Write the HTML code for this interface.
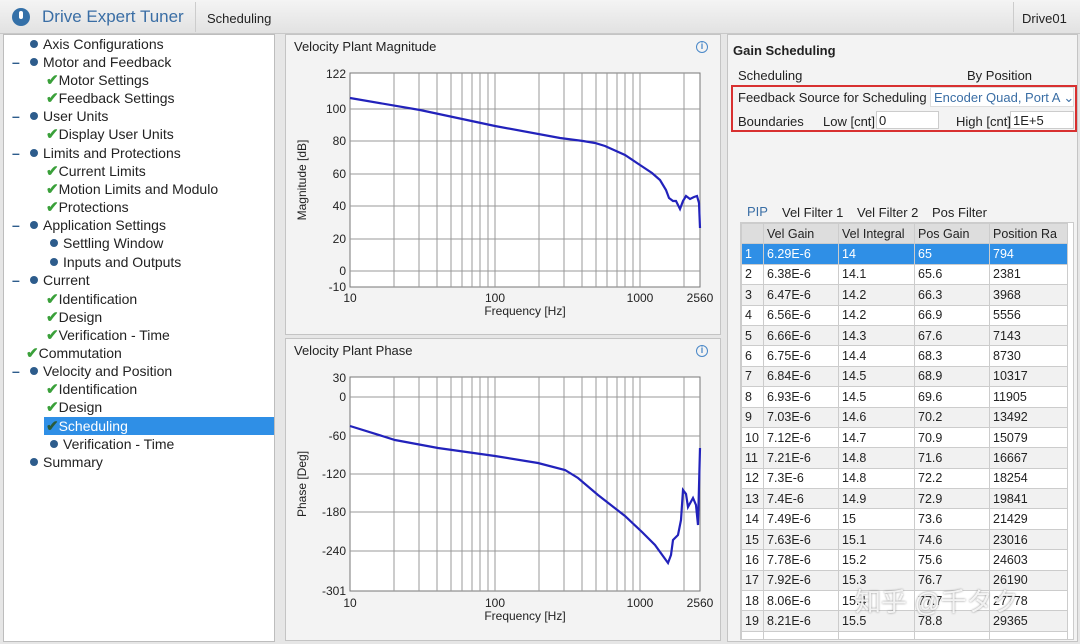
<!DOCTYPE html>
<html><head><meta charset="utf-8"><style>
*{margin:0;padding:0;box-sizing:border-box}
body{width:1080px;height:644px;background:#e6e6e6;font-family:"Liberation Sans",Arial,sans-serif;position:relative;overflow:hidden;color:#222}
.abs{position:absolute}
.hdr{left:0;top:0;width:1080px;height:34px;background:linear-gradient(#f4f4f4,#e2e2e2);border-bottom:1px solid #c8c8c8}
.tree{left:3px;top:34px;width:272px;height:608px;background:#fff;border:1px solid #bdbdbd}
.ti{position:absolute;font-size:14px;line-height:18px;white-space:nowrap}
.dot{display:inline-block;width:8px;height:8px;border-radius:50%;background:#2d5c8c;margin-right:5px;vertical-align:1px}
.ck{color:#3aa03a;font-weight:bold;font-size:15px}
.minus{position:absolute;left:8px;color:#2d5c8c;font-weight:bold}
.panel{background:#f3f3f3;border:1px solid #c4c4c4}
.ptitle{position:absolute;left:8px;top:4px;font-size:13px}
.info{position:absolute;width:12px;height:12px;border:1.5px solid #4a88c8;border-radius:50%;font-size:9px;color:#4a88c8;text-align:center;line-height:9px;font-weight:bold}
.right{left:727px;top:34px;width:351px;height:608px;background:#f3f3f3;border:1px solid #c4c4c4}
table{border-collapse:collapse;font-size:12.5px}
td{height:20.4px;border:1px solid #ccc;padding:0 3px;white-space:nowrap;background:#fff}
tr:nth-child(even) td{background:#f1f1f1}
</style></head><body>
<div class="abs hdr"></div>
<div class="abs" style="left:12px;top:8px;width:18px;height:18px;border-radius:50%;background:#3470a8"></div>
<div class="abs" style="left:19px;top:11px;width:4px;height:8px;background:#fff;border-radius:2px"></div>
<div class="abs" style="left:42px;top:7px;font-size:17px;color:#3a6ea5">Drive Expert Tuner</div>
<div class="abs" style="left:195px;top:2px;width:1px;height:30px;background:#ccc"></div>
<div class="abs" style="left:207px;top:11px;font-size:13px">Scheduling</div>
<div class="abs" style="left:1013px;top:2px;width:1px;height:30px;background:#ccc"></div>
<div class="abs" style="left:1022px;top:11px;font-size:13px">Drive01</div>

<div class="abs tree">
<div class="ti" style="left:26px;top:0px"><span class="dot"></span>Axis Configurations</div>
<div class="ti minus" style="top:18px">–</div><div class="ti" style="left:26px;top:18px"><span class="dot"></span>Motor and Feedback</div>
<div class="ti" style="left:42px;top:36px"><span class="ck">✔</span>Motor Settings</div>
<div class="ti" style="left:42px;top:54px"><span class="ck">✔</span>Feedback Settings</div>
<div class="ti minus" style="top:72px">–</div><div class="ti" style="left:26px;top:72px"><span class="dot"></span>User Units</div>
<div class="ti" style="left:42px;top:90px"><span class="ck">✔</span>Display User Units</div>
<div class="ti minus" style="top:109px">–</div><div class="ti" style="left:26px;top:109px"><span class="dot"></span>Limits and Protections</div>
<div class="ti" style="left:42px;top:127px"><span class="ck">✔</span>Current Limits</div>
<div class="ti" style="left:42px;top:145px"><span class="ck">✔</span>Motion Limits and Modulo</div>
<div class="ti" style="left:42px;top:163px"><span class="ck">✔</span>Protections</div>
<div class="ti minus" style="top:181px">–</div><div class="ti" style="left:26px;top:181px"><span class="dot"></span>Application Settings</div>
<div class="ti" style="left:46px;top:199px"><span class="dot"></span>Settling Window</div>
<div class="ti" style="left:46px;top:218px"><span class="dot"></span>Inputs and Outputs</div>
<div class="ti minus" style="top:236px">–</div><div class="ti" style="left:26px;top:236px"><span class="dot"></span>Current</div>
<div class="ti" style="left:42px;top:255px"><span class="ck">✔</span>Identification</div>
<div class="ti" style="left:42px;top:273px"><span class="ck">✔</span>Design</div>
<div class="ti" style="left:42px;top:291px"><span class="ck">✔</span>Verification - Time</div>
<div class="ti" style="left:22px;top:309px"><span class="ck">✔</span>Commutation</div>
<div class="ti minus" style="top:327px">–</div><div class="ti" style="left:26px;top:327px"><span class="dot"></span>Velocity and Position</div>
<div class="ti" style="left:42px;top:345px"><span class="ck">✔</span>Identification</div>
<div class="ti" style="left:42px;top:363px"><span class="ck">✔</span>Design</div>
<div class="ti" style="left:40px;top:382px;width:230px;height:18px;background:#2f8fe6;color:#fff;padding-left:2px"><span class="ck" style="color:#2a5a3a">✔</span>Scheduling</div>
<div class="ti" style="left:46px;top:400px"><span class="dot"></span>Verification - Time</div>
<div class="ti" style="left:26px;top:418px"><span class="dot"></span>Summary</div>
</div>

<div class="abs panel" style="left:285px;top:34px;width:436px;height:301px"><div class="ptitle">Velocity Plant Magnitude</div><div class="info" style="left:410px;top:6px">i</div></div>
<div class="abs panel" style="left:285px;top:338px;width:436px;height:303px"><div class="ptitle">Velocity Plant Phase</div><div class="info" style="left:410px;top:6px">i</div></div>

<svg class="abs" style="left:0;top:0" width="1080" height="644" viewBox="0 0 1080 644" font-family="Liberation Sans, Arial, sans-serif" font-size="12" fill="#222">
<g id="m">
<rect x="350" y="73" width="350" height="214" fill="#fff" stroke="#777"/>
<g stroke="#999" stroke-width="1">
<path d="M394 73V287M419 73V287M437 73V287M451 73V287M462 73V287M472 73V287M480 73V287M488 73V287M495 73V287M539 73V287M564 73V287M582 73V287M596 73V287M607 73V287M617 73V287M625 73V287M633 73V287M640 73V287M684 73V287"/>
<path d="M350 109H700M350 141H700M350 174H700M350 206H700M350 239H700M350 271H700"/>
</g>
<path d="M350 98 L420 110 L495 126 L560 138 L583 141 L595 143 L605 146 L625 155 L640 165 L652 173 L660 180 L666 190 L669 198 L673 201 L676 201 L680 209 L683 201 L686 196 L690 199 L694 197 L697 196 L699 203 L700 228" fill="none" stroke="#2222bb" stroke-width="2.2"/>
<g text-anchor="end"><text x="346" y="78">122</text><text x="346" y="113">100</text><text x="346" y="145">80</text><text x="346" y="178">60</text><text x="346" y="210">40</text><text x="346" y="243">20</text><text x="346" y="275">0</text><text x="346" y="291">-10</text></g>
<g text-anchor="middle"><text x="350" y="302">10</text><text x="495" y="302">100</text><text x="640" y="302">1000</text><text x="700" y="302">2560</text><text x="525" y="315">Frequency [Hz]</text></g>
<text transform="translate(306 180) rotate(-90)" text-anchor="middle">Magnitude [dB]</text>
</g>
<g>
<rect x="350" y="377" width="350" height="214" fill="#fff" stroke="#777"/>
<g stroke="#999" stroke-width="1">
<path d="M394 377V591M419 377V591M437 377V591M451 377V591M462 377V591M472 377V591M480 377V591M488 377V591M495 377V591M539 377V591M564 377V591M582 377V591M596 377V591M607 377V591M617 377V591M625 377V591M633 377V591M640 377V591M684 377V591"/>
<path d="M350 397H700M350 436H700M350 474H700M350 512H700M350 551H700"/>
</g>
<path d="M350 426 L395 440 L438 448 L495 456 L538 463 L565 470 L578 478 L598 495 L625 516 L642 532 L655 545 L668 563 L671 555 L673 540 L678 535 L681 520 L683 490 L686 494 L688 507 L693 498 L696 505 L698 525 L700 448" fill="none" stroke="#2222bb" stroke-width="2.2"/>
<g text-anchor="end"><text x="346" y="382">30</text><text x="346" y="401">0</text><text x="346" y="440">-60</text><text x="346" y="478">-120</text><text x="346" y="516">-180</text><text x="346" y="555">-240</text><text x="346" y="595">-301</text></g>
<g text-anchor="middle"><text x="350" y="607">10</text><text x="495" y="607">100</text><text x="640" y="607">1000</text><text x="700" y="607">2560</text><text x="525" y="620">Frequency [Hz]</text></g>
<text transform="translate(306 484) rotate(-90)" text-anchor="middle">Phase [Deg]</text>
</g>
</svg>

<div class="abs right"></div>
<div class="abs" style="left:733px;top:43px;font-size:13px;font-weight:bold">Gain Scheduling</div>
<div class="abs" style="left:738px;top:68px;font-size:13px">Scheduling</div>
<div class="abs" style="left:967px;top:68px;font-size:13px">By Position</div>
<div class="abs" style="left:731px;top:85px;width:346px;height:47px;border:2px solid #d83030"></div>
<div class="abs" style="left:738px;top:90px;font-size:13px">Feedback Source for Scheduling</div>
<div class="abs" style="left:930px;top:87px;width:144px;height:20px;background:#fff;border:1px solid #ddd;font-size:13px;color:#3a6ea5;padding:2px 3px;white-space:nowrap;overflow:hidden">Encoder Quad, Port A ⌄</div>
<div class="abs" style="left:738px;top:114px;font-size:13px">Boundaries</div>
<div class="abs" style="left:823px;top:114px;font-size:13px">Low [cnt]</div>
<div class="abs" style="left:876px;top:111px;width:63px;height:18px;background:#fff;border:1px solid #ccc;font-size:13px;padding:1px 2px">0</div>
<div class="abs" style="left:956px;top:114px;font-size:13px">High [cnt]</div>
<div class="abs" style="left:1010px;top:111px;width:64px;height:18px;background:#fff;border:1px solid #ccc;font-size:13px;padding:1px 2px">1E+5</div>

<div class="abs" style="left:747px;top:204px;font-size:13px;color:#3a6ea5">PIP</div>
<div class="abs" style="left:782px;top:205px;font-size:13px">Vel Filter 1</div>
<div class="abs" style="left:857px;top:205px;font-size:13px">Vel Filter 2</div>
<div class="abs" style="left:932px;top:205px;font-size:13px">Pos Filter</div>
<div class="abs" style="left:740px;top:222px;width:334px;height:418px;background:#fff;border:1px solid #ccc;overflow:hidden">
<table style="width:326px;table-layout:fixed">
<colgroup><col style="width:22px"><col style="width:75px"><col style="width:76px"><col style="width:75px"><col style="width:78px"></colgroup>
<tr><td style="background:#ddd"></td><td style="background:#ddd">Vel Gain</td><td style="background:#ddd">Vel Integral</td><td style="background:#ddd">Pos Gain</td><td style="background:#ddd;overflow:hidden">Position Ra</td></tr>
<tr><td style="background:#2f8fe6;color:#fff">1</td><td style="background:#2f8fe6;color:#fff;border:1px dotted #333">6.29E-6</td><td style="background:#2f8fe6;color:#fff">14</td><td style="background:#2f8fe6;color:#fff">65</td><td style="background:#2f8fe6;color:#fff">794</td></tr>
<tr><td>2</td><td>6.38E-6</td><td>14.1</td><td>65.6</td><td>2381</td></tr>
<tr><td>3</td><td>6.47E-6</td><td>14.2</td><td>66.3</td><td>3968</td></tr>
<tr><td>4</td><td>6.56E-6</td><td>14.2</td><td>66.9</td><td>5556</td></tr>
<tr><td>5</td><td>6.66E-6</td><td>14.3</td><td>67.6</td><td>7143</td></tr>
<tr><td>6</td><td>6.75E-6</td><td>14.4</td><td>68.3</td><td>8730</td></tr>
<tr><td>7</td><td>6.84E-6</td><td>14.5</td><td>68.9</td><td>10317</td></tr>
<tr><td>8</td><td>6.93E-6</td><td>14.5</td><td>69.6</td><td>11905</td></tr>
<tr><td>9</td><td>7.03E-6</td><td>14.6</td><td>70.2</td><td>13492</td></tr>
<tr><td>10</td><td>7.12E-6</td><td>14.7</td><td>70.9</td><td>15079</td></tr>
<tr><td>11</td><td>7.21E-6</td><td>14.8</td><td>71.6</td><td>16667</td></tr>
<tr><td>12</td><td>7.3E-6</td><td>14.8</td><td>72.2</td><td>18254</td></tr>
<tr><td>13</td><td>7.4E-6</td><td>14.9</td><td>72.9</td><td>19841</td></tr>
<tr><td>14</td><td>7.49E-6</td><td>15</td><td>73.6</td><td>21429</td></tr>
<tr><td>15</td><td>7.63E-6</td><td>15.1</td><td>74.6</td><td>23016</td></tr>
<tr><td>16</td><td>7.78E-6</td><td>15.2</td><td>75.6</td><td>24603</td></tr>
<tr><td>17</td><td>7.92E-6</td><td>15.3</td><td>76.7</td><td>26190</td></tr>
<tr><td>18</td><td>8.06E-6</td><td>15.4</td><td>77.7</td><td>27778</td></tr>
<tr><td>19</td><td>8.21E-6</td><td>15.5</td><td>78.8</td><td>29365</td></tr>
<tr><td></td><td></td><td></td><td></td><td></td></tr>
</table></div>
<div class="abs" style="left:855px;top:582px;font-size:26px;color:rgba(255,255,255,0.85);font-family:'Liberation Sans','Noto Sans CJK SC',sans-serif;text-shadow:0 0 2px #888">知乎 @千タク</div>
</body></html>
